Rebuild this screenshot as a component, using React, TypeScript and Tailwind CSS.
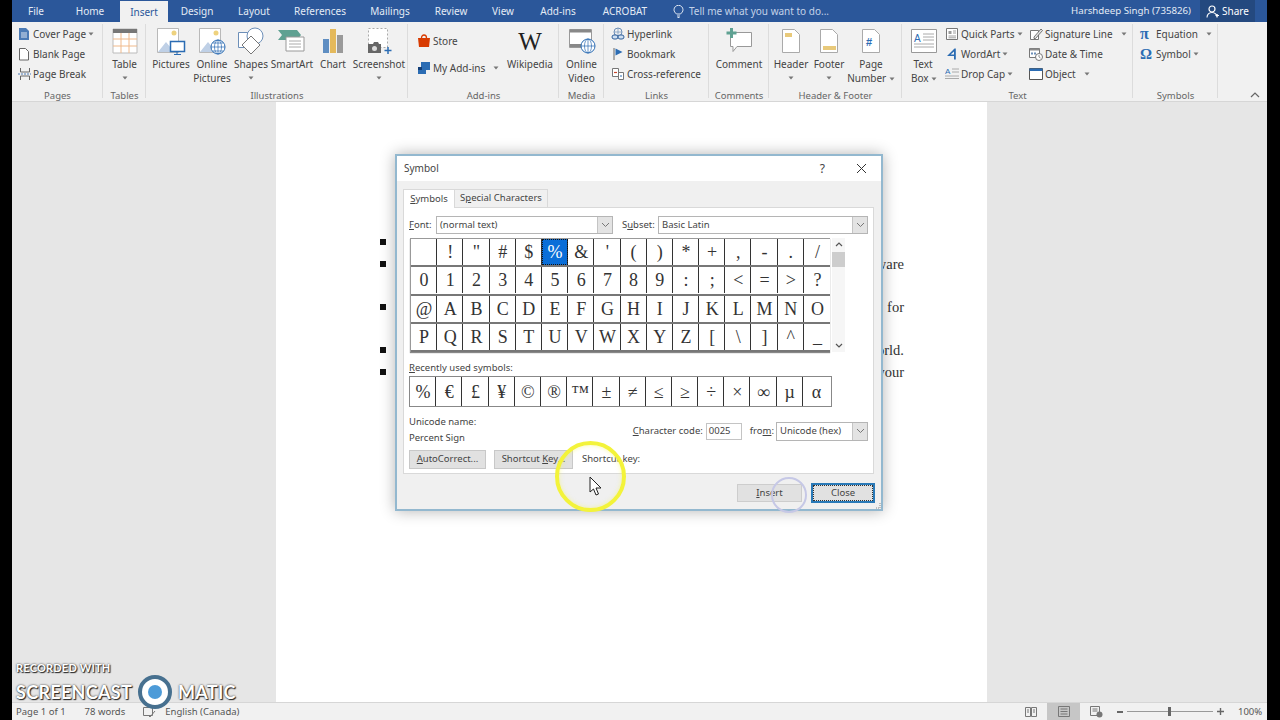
import React from 'react';

const sans = 'font-["Noto_Sans","Open_Sans",sans-serif]';

const tabs = [
    { label: 'File', cls: 'w-[48px]' },
    { label: 'Home', cls: 'w-[60px]' },
    { label: 'Insert', cls: 'w-[48px] bg-[#f1f1f1] text-[#2b579a] mt-[1px]' },
    { label: 'Design', cls: 'w-[58px]' },
    { label: 'Layout', cls: 'w-[56px]' },
    { label: 'References', cls: 'w-[76px]' },
    { label: 'Mailings', cls: 'w-[64px]' },
    { label: 'Review', cls: 'w-[58px]' },
    { label: 'View', cls: 'w-[46px]' },
    { label: 'Add-ins', cls: 'w-[64px]' },
    { label: 'ACROBAT', cls: 'w-[70px]' },
];

const row1 = [' ', '!', '"', '#', '$', '%', '&', "'", '(', ')', '*', '+', ',', '-', '.', '/'];
const row2 = ['0', '1', '2', '3', '4', '5', '6', '7', '8', '9', ':', ';', '<', '=', '>', '?'];
const row3 = ['@', 'A', 'B', 'C', 'D', 'E', 'F', 'G', 'H', 'I', 'J', 'K', 'L', 'M', 'N', 'O'];
const row4 = ['P', 'Q', 'R', 'S', 'T', 'U', 'V', 'W', 'X', 'Y', 'Z', '[', '\\', ']', '^', '_'];
const recent = ['%', '€', '£', '¥', '©', '®', '™', '±', '≠', '≤', '≥', '÷', '×', '∞', 'µ', 'α'];

function Caret({ className = '' }: { className?: string }) {
    return (
        <svg width="6" height="4" viewBox="0 0 6 4" className={`inline-block shrink-0 ${className}`}>
            <path d="M0.5 0.5h5L3 3.5z" fill="#777" />
        </svg>
    );
}

function I({ w = 14, h = 14, children }: { w?: number; h?: number; children: React.ReactNode }) {
    return (
        <svg width={w} height={h} viewBox={`0 0 ${w} ${h}`} className="shrink-0">
            {children}
        </svg>
    );
}

function Picture() {
    return (
        <>
            <path d="M1.500 1.500h21v24h-21z" fill="#fff" stroke="#b9b9b9" />
            <path d="M2 25l8-10 5 6 3-3 5 5v2H2z" fill="#bfd0e6" />
            <circle cx="18" cy="6" r="2.500" fill="#eed27e" />
        </>
    );
}

const icons: Record<string, React.ReactNode> = {
    cover: (
        <I>
            <path d="M2 1h7l3 3v9H2z" fill="#4c7bb5" />
            <path d="M4 6h6M4 8h6M4 10h6" stroke="#fff" strokeWidth="0.8" />
        </I>
    ),
    blank: (
        <I>
            <path d="M2.500 1.500h6l3 3v8.500h-9z" fill="#fff" stroke="#666" />
        </I>
    ),
    break: (
        <I>
            <path d="M3.500 1v4h9V1M3.500 13V9h9v4" fill="none" stroke="#666" />
            <path d="M1 7h13" stroke="#4c7bb5" strokeDasharray="2 1" />
        </I>
    ),
    store: (
        <I>
            <path d="M1 4h12l-1 9H2z" fill="#d83b01" />
            <path d="M4.500 4c0-4 5-4 5 0" fill="none" stroke="#d83b01" strokeWidth="1.300" />
        </I>
    ),
    addins: (
        <I>
            <path d="M4 1h9v8H9v4H1V6h3z" fill="#2b6cb3" />
            <path d="M1 6h4v3H1z" fill="#123f78" />
        </I>
    ),
    hyperlink: (
        <I>
            <circle cx="7" cy="5" r="4" fill="none" stroke="#6d8fb8" />
            <path d="M3 5h8M7 1v8" stroke="#6d8fb8" strokeWidth="0.7" />
            <rect x="1" y="8" width="6" height="4" rx="2" fill="#cfe0f2" stroke="#2f5f9a" />
            <rect x="7" y="8" width="6" height="4" rx="2" fill="#cfe0f2" stroke="#2f5f9a" />
        </I>
    ),
    bookmark: (
        <I>
            <path d="M3 1v12" stroke="#666" />
            <path d="M4.500 1.500l7 3.500-7 3.500z" fill="#2b6cb3" />
        </I>
    ),
    crossref: (
        <I>
            <path d="M1.500 1.500h6v8h-6zM7.500 5.500h5v7h-5z" fill="#fff" stroke="#777" />
            <path d="M3 5.500h3" stroke="#c8452b" strokeWidth="1.200" />
            <path d="M9 9h2" stroke="#2b6cb3" strokeWidth="1.200" />
        </I>
    ),
    quick: (
        <I>
            <path d="M1.500 1.500h11v11h-11z" fill="#fff" stroke="#777" />
            <path d="M3.500 4h3v3h-3z" fill="#9b9b9b" />
            <path d="M8 4h3M8 6h3M3.500 9h7.500M3.500 10.800h7.500" stroke="#888" strokeWidth="0.8" />
        </I>
    ),
    wordart: (
        <I>
            <path d="M9.500 1.500L2 9h7v3.500h1.800V1.500z M9 4.500L5.500 7.500H9z" fill="#2b6cb3" fillRule="evenodd" />
        </I>
    ),
    dropcap: (
        <I>
            <text x="0" y="7" fontSize="8" fill="#2b6cb3" fontFamily="Liberation Sans">A</text>
            <path d="M7 2h7M7 5h7M0 9h14M0 11.500h14" stroke="#aaa" />
        </I>
    ),
    signature: (
        <I>
            <path d="M1.500 3.500h8v9h-8z" fill="#fff" stroke="#777" />
            <path d="M5 10l7-8 1.500 1.500-7 8H5z" fill="#e5e5e5" stroke="#555" strokeWidth="0.8" />
        </I>
    ),
    date: (
        <I>
            <path d="M.5 1.500h10v9H.5z" fill="#fff" stroke="#777" />
            <path d="M1 1.500h9.500v2H1z" fill="#8a8a8a" />
            <path d="M2 5.500h2v2H2zM5 5.500h2v2H5z" fill="#6d8fb8" />
            <circle cx="10" cy="10" r="3.500" fill="#fff" stroke="#777" />
            <path d="M10 8v2l1.500 1" fill="none" stroke="#777" strokeWidth="0.8" />
        </I>
    ),
    object: (
        <I>
            <path d="M.5 1.500h13v11H.5z" fill="#fff" stroke="#555" />
            <path d="M.5 1.500h13v2.500H.5z" fill="#2b6cb3" />
        </I>
    ),
};

function SmallBtn({ icon, label, caret, gap }: { icon: string; label: string; caret?: boolean; gap?: string }) {
    return (
        <div className="flex items-center h-5 whitespace-nowrap">
            {icons[icon]}
            <span className="ml-[2px]">{label}</span>
            {caret && <Caret className={gap || 'ml-[2px]'} />}
        </div>
    );
}

function BigBtn({ w, icon, lines, caret }: { w: string; icon: React.ReactNode; lines: string[]; caret?: boolean }) {
    return (
        <div className={`${w} shrink-0 flex flex-col items-center h-full pt-[4px]`}>
            <div className="h-[30px] flex items-center justify-center">{icon}</div>
            <div className="mt-[1px] text-center leading-[14px] whitespace-nowrap">
                {lines.map(l => <div key={l}>{l}</div>)}
                {caret && <div className="h-[14px] flex items-center justify-center"><Caret /></div>}
            </div>
        </div>
    );
}

function Group({ w, label, children, inner = '' }: { w: string; label: string; children: React.ReactNode; inner?: string }) {
    return (
        <div className={`${w} shrink-0 flex flex-col h-full relative`}>
            <div className={`h-[68px] flex ${inner}`}>{children}</div>
            <div className="h-[11px] leading-[12px] text-center text-[9.500px] text-[#666]">{label}</div>
            <div className="absolute right-0 top-[2px] bottom-[3px] w-px bg-[#dcdcdc]" />
        </div>
    );
}

function Ribbon() {
    return (
        <div className="h-[80px] bg-[#f1f1f1] flex text-[10px] text-[#444] border-b border-[#d6d6d6] relative shrink-0">
            <Group w="w-[91px]" label="Pages" inner="flex-col pl-[5px] pt-[2px]">
                <SmallBtn icon="cover" label="Cover Page" caret />
                <SmallBtn icon="blank" label="Blank Page" />
                <SmallBtn icon="break" label="Page Break" />
            </Group>
            <Group w="w-[43px]" label="Tables">
                <BigBtn w="w-full" lines={['Table']} caret icon={
                    <I w={26} h={26}>
                        <path d="M1 1h24v24H1z" fill="#fff" stroke="#bbb" />
                        <path d="M1 1h24v4H1z" fill="#777" />
                        <path d="M1 11h24M1 18h24M9 5v20M17 5v20" stroke="#f0b98a" />
                    </I>
                } />
            </Group>
            <Group w="w-[262px]" label="Illustrations" inner="pl-[3px]">
                <BigBtn w="w-[44px]" lines={['Pictures']} icon={
                    <I w={30} h={28}>
                        <Picture />
                        <path d="M14.500 14.500h14v10h-14z" fill="#fff" stroke="#2b6cb3" strokeWidth="1.500" />
                        <path d="M21 25v2M18 27.500h7" stroke="#2b6cb3" />
                    </I>
                } />
                <BigBtn w="w-[38px]" lines={['Online', 'Pictures']} icon={
                    <I w={28} h={28}>
                        <Picture />
                        <circle cx="20" cy="20" r="7" fill="#fff" stroke="#2b6cb3" />
                        <path d="M13 20h14M20 13v14M15 16h10M15 24h10" stroke="#2b6cb3" strokeWidth="0.7" />
                        <ellipse cx="20" cy="20" rx="3.500" ry="7" fill="none" stroke="#2b6cb3" strokeWidth="0.7" />
                    </I>
                } />
                <BigBtn w="w-[40px]" lines={['Shapes']} caret icon={
                    <I w={28} h={28}>
                        <path d="M1.500 5.500h15v15h-15z" fill="#fff" stroke="#6d8fb8" />
                        <circle cx="18" cy="9" r="8" fill="#fff" stroke="#6d8fb8" />
                        <path d="M14 9l9 9-9 9-9-9z" fill="#fff" stroke="#777" />
                    </I>
                } />
                <BigBtn w="w-[42px]" lines={['SmartArt']} icon={
                    <I w={30} h={26}>
                        <path d="M1 2h19l4 5-4 5H1l4-5z" fill="#5fa192" />
                        <path d="M9 9h18v14H9z" fill="#fff" stroke="#999" />
                        <path d="M12 13h12M12 16h12M12 19h12" stroke="#aaa" />
                    </I>
                } />
                <BigBtn w="w-[40px]" lines={['Chart']} icon={
                    <I w={24} h={26}>
                        <path d="M2 11h6v14H2z" fill="#5f8ec2" />
                        <path d="M9 1h6v24H9z" fill="#e4b95b" />
                        <path d="M16 7h6v18h-6z" fill="#9a9a9a" />
                    </I>
                } />
                <BigBtn w="w-[52px]" lines={['Screenshot']} caret icon={
                    <I w={28} h={28}>
                        <path d="M3.500 1.500h19v19h-19z" fill="#fff" stroke="#aaa" strokeDasharray="2 2" />
                        <path d="M3 17h5l1-2h4l1 2h2v9H3z" fill="#666" />
                        <circle cx="9.500" cy="21.500" r="2.500" fill="#ddd" />
                        <path d="M23 20v7M19.500 23.500h7" stroke="#2b6cb3" strokeWidth="1.500" />
                    </I>
                } />
            </Group>
            <Group w="w-[151px]" label="Add-ins" inner="pl-[9px]">
                <div className="flex flex-col w-[85px] pt-[9px] gap-[7px]">
                    <SmallBtn icon="store" label="Store" />
                    <SmallBtn icon="addins" label="My Add-ins" caret gap="ml-[8px]" />
                </div>
                <BigBtn w="w-[56px]" lines={['Wikipedia']} icon={
                    <span className='font-["Liberation_Serif",serif] text-[25px] leading-none text-[#222]'>W</span>
                } />
            </Group>
            <Group w="w-[45px]" label="Media">
                <BigBtn w="w-full" lines={['Online', 'Video']} icon={
                    <I w={28} h={28}>
                        <path d="M1.500 2.500h22v18h-22z" fill="#fff" stroke="#999" />
                        <path d="M2 2.500h21v3H2zM2 17h21v3H2z" fill="#888" />
                        <circle cx="20" cy="19" r="7" fill="#fff" stroke="#2b6cb3" />
                        <path d="M13 19h14M20 12v14" stroke="#2b6cb3" strokeWidth="0.7" />
                        <ellipse cx="20" cy="19" rx="3.500" ry="7" fill="none" stroke="#2b6cb3" strokeWidth="0.7" />
                    </I>
                } />
            </Group>
            <Group w="w-[105px]" label="Links" inner="flex-col pl-[7px] pt-[2px]">
                <SmallBtn icon="hyperlink" label="Hyperlink" />
                <SmallBtn icon="bookmark" label="Bookmark" />
                <SmallBtn icon="crossref" label="Cross-reference" />
            </Group>
            <Group w="w-[60px]" label="Comments">
                <BigBtn w="w-full" lines={['Comment']} icon={
                    <I w={28} h={26}>
                        <path d="M5.500 4.500h21v14H12l-4 5v-5H5.500z" fill="#fff" stroke="#999" />
                        <path d="M5 0h3v3.500h3.500v3H8V10H5V6.500H1.500v-3H5z" fill="#5fa192" />
                    </I>
                } />
            </Group>
            <Group w="w-[133px]" label="Header & Footer" inner="pl-[3px]">
                <BigBtn w="w-[38px]" lines={['Header']} caret icon={
                    <I w={20} h={26}>
                        <path d="M1.500 1.500h12l5 5v18h-17z" fill="#fff" stroke="#aaa" />
                        <path d="M4 5h7v4H4z" fill="#e8c97a" />
                    </I>
                } />
                <BigBtn w="w-[38px]" lines={['Footer']} caret icon={
                    <I w={20} h={26}>
                        <path d="M1.500 1.500h12l5 5v18h-17z" fill="#fff" stroke="#aaa" />
                        <path d="M4 18h13v4H4z" fill="#e8c97a" />
                    </I>
                } />
                <div className="w-[46px] shrink-0 flex flex-col items-center pt-[4px]">
                    <div className="h-[30px] flex items-center justify-center">
                        <I w={20} h={26}>
                            <path d="M1.500 1.500h12l5 5v18h-17z" fill="#fff" stroke="#aaa" />
                            <text x="5" y="18" fontSize="11" fontWeight="700" fill="#2b6cb3" fontFamily="Liberation Sans">#</text>
                        </I>
                    </div>
                    <div className="mt-[1px] text-center leading-[14px] whitespace-nowrap">
                        <div>Page</div>
                        <div>Number <Caret /></div>
                    </div>
                </div>
            </Group>
            <Group w="w-[231px]" label="Text" inner="pl-[9px]">
                <div className="w-[34px] shrink-0 flex flex-col items-start pt-[4px]">
                    <div className="h-[30px] flex items-center">
                        <I w={26} h={24}>
                            <path d="M.5 .5h25v23H.5z" fill="#fff" stroke="#999" />
                            <text x="3" y="13" fontSize="10" fill="#2b6cb3" fontFamily="Liberation Sans">A</text>
                            <path d="M12 5h11M12 8h11M12 11h11M3 15h20M3 18h20" stroke="#aaa" />
                        </I>
                    </div>
                    <div className="mt-[1px] w-[24px] text-center leading-[14px] whitespace-nowrap">
                        <div>Text</div>
                        <div>Box <Caret /></div>
                    </div>
                </div>
                <div className="w-[84px] shrink-0 flex flex-col pt-[2px]">
                    <SmallBtn icon="quick" label="Quick Parts" caret />
                    <SmallBtn icon="wordart" label="WordArt" caret />
                    <SmallBtn icon="dropcap" label="Drop Cap" caret />
                </div>
                <div className="flex flex-col pt-[2px]">
                    <SmallBtn icon="signature" label="Signature Line" caret gap="ml-[8px]" />
                    <SmallBtn icon="date" label="Date & Time" />
                    <SmallBtn icon="object" label="Object" caret gap="ml-[8px]" />
                </div>
            </Group>
            <Group w="w-[85px]" label="Symbols" inner="flex-col pl-[7px] pt-[2px]">
                <div className="flex items-center h-5 whitespace-nowrap">
                    <span className='w-[14px] font-["Liberation_Serif",serif] text-[16px] font-bold text-[#2b6cb3] leading-none'>π</span>
                    <span className="ml-[2px]">Equation</span>
                    <Caret className="ml-[8px]" />
                </div>
                <div className="flex items-center h-5 whitespace-nowrap">
                    <span className='w-[14px] font-["Liberation_Serif",serif] text-[15px] font-bold text-[#2b6cb3] leading-none'>Ω</span>
                    <span className="ml-[2px]">Symbol</span>
                    <Caret className="ml-[2px]" />
                </div>
            </Group>
            <div className="flex-1 flex items-end justify-end pr-[7px] pb-[3px]">
                <svg width="10" height="6" viewBox="0 0 10 6">
                    <path d="M1 5l4-4 4 4" fill="none" stroke="#666" strokeWidth="1.200" />
                </svg>
            </div>
        </div>
    );
}

function Select({ w, h = 'h-[18px]', children }: { w: string; h?: string; children: React.ReactNode }) {
    return (
        <div className={`${w} ${h} border border-[#b5b5b5] bg-white flex items-center justify-between shrink-0`}>
            <span className="pl-[3px] whitespace-nowrap">{children}</span>
            <span className="w-[15px] h-full bg-[#e3e3e3] border-l border-[#c4c4c4] flex items-center justify-center">
                <svg width="9" height="6" viewBox="0 0 9 6"><path d="M1 1l3.500 3.500L8 1" fill="none" stroke="#777" /></svg>
            </span>
        </div>
    );
}

function Cell({ ch, selected, small, last }: { ch: string; selected?: boolean; small?: boolean; last?: boolean }) {
    return (
        <div className={`flex items-center justify-center leading-none pl-[1px] ${last ? '' : 'border-r border-[#333]'} ${small ? 'h-[29px]' : 'h-[26px]'} ${selected ? 'bg-[#0a6ed8] text-white outline-1 outline-dotted -outline-offset-1 outline-[#111]' : 'text-[#333]'}`}>
            {ch}
        </div>
    );
}

function SymbolDialog() {
    return (
        <div className={`absolute left-[395px] top-[154px] w-[488px] h-[357px] bg-[#f0f0f0] border-2 border-[#93b8cf] shadow-[0_0_14px_rgba(0,0,0,0.3)] text-[9.500px] text-[#444] flex flex-col ${sans}`}>
            <div className="h-[25px] bg-white flex items-center justify-between shrink-0 pl-[7px] pr-[14px]">
                <span className="text-[10px]">Symbol</span>
                <div className="flex items-center gap-[31px]">
                    <span className="text-[12px] text-[#444]">?</span>
                    <svg width="11" height="11" viewBox="0 0 11 11"><path d="M1 1l9 9M10 1l-9 9" stroke="#333" strokeWidth="1" /></svg>
                </div>
            </div>
            <div className="h-[8px] shrink-0" />
            <div className="flex ml-[6px] h-[18px] shrink-0 relative z-10">
                <div className="w-[52px] h-[19px] bg-white border border-b-0 border-[#d9d9d9] flex items-center justify-center"><span><u>S</u>ymbols</span></div>
                <div className="w-[93px] h-[18px] bg-[#f0f0f0] border border-l-0 border-b-0 border-[#d9d9d9] flex items-center justify-center"><span>S<u>p</u>ecial Characters</span></div>
            </div>
            <div className="ml-[6px] mr-[7px] h-[267px] bg-white border border-[#d9d9d9] shrink-0 pl-[5px] pt-[8px]">
                <div className="flex items-center h-[18px]">
                    <span className="w-[27px]"><u>F</u>ont:</span>
                    <Select w="w-[177px]">(normal text)</Select>
                    <span className="ml-[9px] w-[36px]">S<u>u</u>bset:</span>
                    <Select w="w-[210px]">Basic Latin</Select>
                </div>
                <div className="flex mt-[4px] ml-[1px]">
                    <div className='w-[420px] h-[114px] border-l border-t border-[#999] font-["Liberation_Serif",serif] text-[18px] grid grid-cols-[repeat(16,26.2px)] shadow-[0_1px_1px_#888]'>
                        {[row1, row2, row3, row4].map((row, i) => row.map((ch, j) => (
                            <div key={`${i}-${j}`} className="border-b-2 border-[#777]">
                                <Cell ch={ch} selected={i === 0 && j === 5} last={j === 15} />
                            </div>
                        )))}
                    </div>
                    <div className="ml-[2px] w-[13px] h-[114px] bg-[#f6f6f6] flex flex-col items-center justify-between py-[4px] relative">
                        <svg width="8" height="5" viewBox="0 0 8 5"><path d="M1 4l3-3 3 3" fill="none" stroke="#555" strokeWidth="1.200" /></svg>
                        <div className="absolute top-[14px] left-0 w-full h-[15px] bg-[#cdcdcd]" />
                        <svg width="8" height="5" viewBox="0 0 8 5"><path d="M1 1l3 3 3-3" fill="none" stroke="#555" strokeWidth="1.200" /></svg>
                    </div>
                </div>
                <div className="mt-[9px] leading-[14px]"><u>R</u>ecently used symbols:</div>
                <div className='mt-[1px] w-[423px] border border-[#888] font-["Liberation_Serif",serif] text-[18px] grid grid-cols-[repeat(16,26.2px)]'>
                    {recent.map((ch, i) => <Cell key={ch} ch={ch} small last={i === 15} />)}
                </div>
                <div className="flex justify-between mt-[7px] h-[33px] pr-[5px]">
                    <div className="leading-[16px]">
                        <div>Unicode name:</div>
                        <div>Percent Sign</div>
                    </div>
                    <div className="flex items-center h-[20px] mt-[7px]">
                        <span><u>C</u>haracter code:</span>
                        <div className="ml-[3px] w-[36px] h-[17px] border border-[#c4c4c4] bg-white flex items-center pl-[2px]">0025</div>
                        <span className="ml-[8px]">fro<u>m</u>:</span>
                        <div className="ml-[2px]"><Select w="w-[92px]" h="h-[19px]">Unicode (hex)</Select></div>
                    </div>
                </div>
                <div className="flex items-center mt-[2px] h-[20px]">
                    <div className="w-[77px] h-[19px] bg-[#e1e1e1] border border-[#c8c8c8] flex items-center justify-center"><span><u>A</u>utoCorrect...</span></div>
                    <div className="ml-[8px] w-[79px] h-[19px] bg-[#e1e1e1] border border-[#c8c8c8] flex items-center justify-center"><span>Shortcut <u>K</u>ey...</span></div>
                    <span className="ml-[9px]">Shortcut key:</span>
                </div>
            </div>
            <div className="flex justify-end items-center h-[20px] mt-[9px] pr-[6px] gap-[9px]">
                <div className="w-[65px] h-[18px] bg-[#e1e1e1] border border-[#cdcdcd] flex items-center justify-center"><span><u>I</u>nsert</span></div>
                <div className="w-[64px] h-[20px] bg-[#e1e1e1] border-2 border-[#2a7ab8] flex items-center justify-center outline-1 outline-dotted -outline-offset-3 outline-[#333]">Close</div>
            </div>
            <svg width="8" height="8" viewBox="0 0 8 8" className="absolute right-0 bottom-0">
                <path d="M7 2v5H2" fill="none" stroke="#888" strokeDasharray="1 1" />
            </svg>
        </div>
    );
}

function Bullet({ text, gap = '' }: { text?: string; gap?: string }) {
    return (
        <div className={`h-[22px] flex justify-between items-center ${gap}`}>
            <div className="w-[6px] h-[6px] bg-[#111]" />
            {text && <span className='mt-[2px] font-["Liberation_Serif",serif] text-[14.500px] text-[#333]'>{text}</span>}
        </div>
    );
}

function StatusBar() {
    return (
        <div className={`h-[18px] bg-[#f1f1f1] border-t border-[#d6d6d6] flex items-center text-[9.500px] text-[#555] shrink-0 ${sans}`}>
            <span className="ml-[4px] mt-[1px]">Page 1 of 1</span>
            <span className="ml-[19px] mt-[1px]">78 words</span>
            <svg width="14" height="12" viewBox="0 0 14 12" className="ml-[17px]">
                <path d="M1.500 1.500h9v8h-9z" fill="none" stroke="#777" />
                <path d="M6 9l2 2 5-6" fill="none" stroke="#777" />
            </svg>
            <span className="ml-[9px] mt-[1px]">English (Canada)</span>
            <div className="flex-1" />
            <div className="w-[33px] h-full flex items-center justify-center">
                <svg width="12" height="11" viewBox="0 0 12 11"><path d="M.5 1.500h5v9h-5zM6.500 1.500h5v9h-5zM2 4h2M2 6h2M8 4h2M8 6h2" fill="none" stroke="#777" /></svg>
            </div>
            <div className="w-[33px] h-full bg-[#c6c6c6] flex items-center justify-center">
                <svg width="12" height="11" viewBox="0 0 12 11"><path d="M.5 .5h11v10H.5zM2.500 3h7M2.500 5.500h7M2.500 8h7" fill="none" stroke="#777" /></svg>
            </div>
            <div className="w-[33px] h-full flex items-center justify-center">
                <svg width="13" height="12" viewBox="0 0 13 12"><path d="M.5 .5h9v9h-9zM2.500 3h5M2.500 5h5" fill="none" stroke="#777" /><circle cx="9.500" cy="8.500" r="3" fill="#777" /></svg>
            </div>
            <span className="ml-[4px] w-[6px] h-[2px] bg-[#666]" />
            <div className="ml-[4px] w-[86px] h-px bg-[#999] relative">
                <div className="absolute left-[41px] -top-[4px] w-[3px] h-[9px] bg-[#666]" />
            </div>
            <svg width="9" height="9" viewBox="0 0 9 9" className="ml-[3px]"><path d="M4.500 1v7M1 4.500h7" stroke="#666" strokeWidth="1.400" /></svg>
            <span className="ml-[13px] w-[24px] mr-[5px] mt-[1px] whitespace-nowrap">100%</span>
        </div>
    );
}

export default function App() {
    return (
        <div className={`w-[1280px] h-[720px] bg-black flex overflow-hidden relative ${sans}`}>
            <div className="ml-[12px] w-[1255px] h-full flex flex-col bg-[#e6e6e6]">
                {/* tab strip */}
                <div className="h-[22px] bg-[#2b579a] flex items-stretch text-[10px] text-[#e4ebf5] shrink-0">
                    {tabs.map(t => (
                        <div key={t.label} className={`${t.cls} flex items-center justify-center shrink-0 pt-[1px]`}>{t.label}</div>
                    ))}
                    <div className="flex items-center ml-[13px] pt-[1px] text-[#c3d2e8]">
                        <svg width="11" height="13" viewBox="0 0 11 13" className="mr-[5px]">
                            <path d="M3.500 9C2 7.500 1 6.500 1 4.800a4.500 4.500 0 0 1 9 0C10 6.500 9 7.500 7.500 9zM4 11h3M4.500 12.500h2" fill="none" stroke="#dfe7f2" />
                        </svg>
                        Tell me what you want to do...
                    </div>
                    <div className="flex-1" />
                    <div className="flex items-center mr-[9px] pt-[1px] text-[9.700px]">Harshdeep Singh (735826)</div>
                    <div className="flex items-center w-[55px] bg-[#24497f] pl-[6px] mr-[12px] pt-[1px] text-white">
                        <svg width="13" height="13" viewBox="0 0 13 13" className="mr-[3px]">
                            <circle cx="6" cy="4" r="3" fill="none" stroke="#fff" strokeWidth="1.200" />
                            <path d="M1 12.500c0-3 2-5 5-5s5 2 5 5M9.500 10.500h3.500M11.200 9v3.200" fill="none" stroke="#fff" strokeWidth="1.100" />
                        </svg>
                        Share
                    </div>
                </div>
                <Ribbon />
                {/* document canvas */}
                <div className="flex-1 flex pl-[264px] overflow-hidden min-h-0">
                    <div className="w-[711px] bg-white pl-[104px] pr-[83px] pt-[129px]">
                        <Bullet />
                        <Bullet text="ware" />
                        <Bullet text="for" gap="mt-[21px]" />
                        <Bullet text="world." gap="mt-[21px]" />
                        <Bullet text="your" />
                    </div>
                </div>
                <StatusBar />
            </div>

            <SymbolDialog />

            {/* recording overlays */}
            <div className="absolute left-[555px] top-[441px] w-[71px] h-[71px] rounded-full border-[4px] border-[#f3f33a] shadow-[inset_0_0_4px_rgba(245,245,90,0.5)]" />
            <div className="absolute left-[771px] top-[477px] w-[36px] h-[36px] rounded-full border-2 border-[#c6c8e6]" />
            <svg width="14" height="20" viewBox="0 0 14 20" className="absolute left-[589px] top-[476px]">
                <path d="M1 1v15l3.500-3 2.500 6 2.500-1-2.500-6h5z" fill="#fff" stroke="#222" />
            </svg>

            <div className='absolute left-[16px] top-[661px] text-[11px] font-bold font-["Lato",sans-serif] text-white leading-[14px] tracking-[0.2px] [text-shadow:0_0_2px_#222,1px_1px_1px_#222]'>RECORDED WITH</div>
            <div className='absolute left-[16px] top-[675px] h-[34px] flex items-center font-["Lato",sans-serif] font-bold text-[18px] text-white tracking-[0.3px] [text-shadow:0_0_2px_#222,1px_1px_1px_#222]'>
                <span className="w-[122px]">SCREENCAST</span>
                <div className="w-[34px] h-[34px] rounded-full border-[4px] border-[#47708f] bg-white flex items-center justify-center">
                    <div className="w-[14px] h-[14px] rounded-full bg-[#4d9bd8]" />
                </div>
                <span className="ml-[6px]">MATIC</span>
            </div>
        </div>
    );
}
